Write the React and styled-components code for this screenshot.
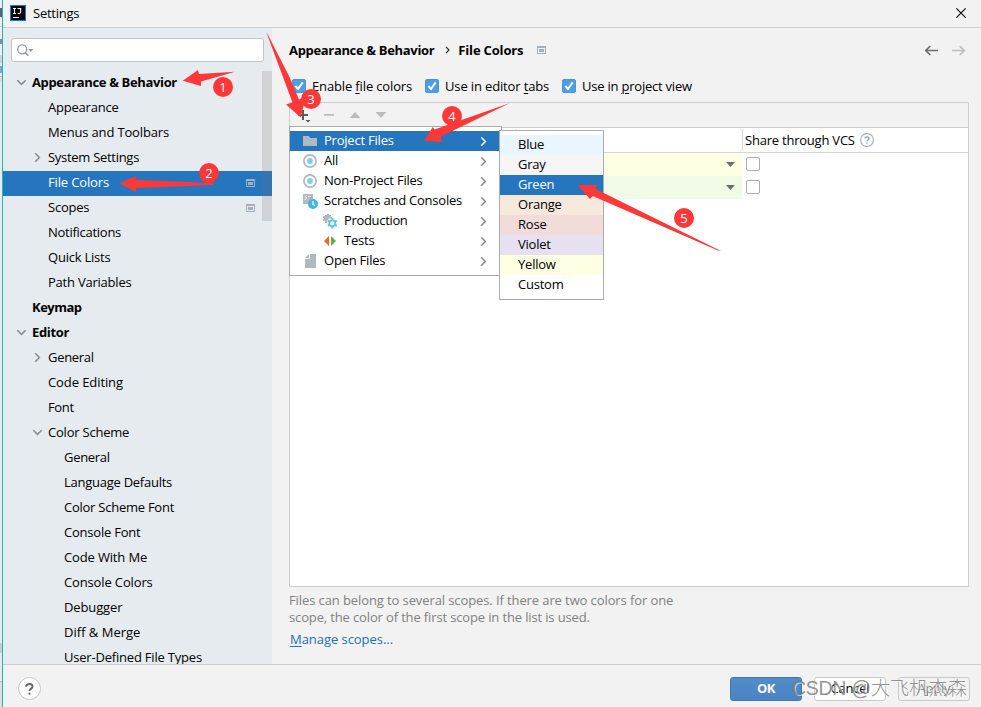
import React from 'react';
import styled, { createGlobalStyle, css } from 'styled-components';

const GlobalStyle = createGlobalStyle`
  * { box-sizing: border-box; }
  html, body { margin: 0; padding: 0; overflow: hidden; }
  body {
    font-family: "Open Sans", "Noto Sans", "Noto Sans CJK SC", sans-serif;
    font-size: 13px;
    line-height: 18px;
    color: #000;
    background: #f2f2f2;
  }
  svg { display: block; flex: none; }
`;

const Screen = styled.div`
  position: relative;
  display: flex;
  width: 981px;
  height: 707px;
  overflow: hidden;
`;

/* Sliver of the editor window that stays visible behind the dialog */
const Backdrop = styled.div`
  display: flex;
  flex-direction: column;
  flex: none;
  width: 2px;
  overflow: hidden;
`;

const BackdropPiece = styled.div`
  flex: none;
  height: ${(p) => p.$h}px;
  background: ${(p) => p.$c};
`;

const Dialog = styled.div`
  flex: 1;
  min-width: 0;
  display: flex;
  flex-direction: column;
  border-left: 1px solid #12bcc0;
  background: #f2f2f2;
`;

const Label = styled.span`
  white-space: pre;
  letter-spacing: ${(p) => (p.$ls === undefined ? -0.22 : p.$ls)}px;
  font-weight: ${(p) => (p.$bold ? 700 : 400)};
`;

const Mnemonic = styled.span`
  text-decoration: underline;
  text-underline-offset: 2px;
  text-decoration-thickness: 1px;
`;

const TitleBar = styled.header`
  display: flex;
  align-items: center;
  gap: 7px;
  height: 28px;
  padding: 0 15px 1px 7px;
  border-bottom: 1px solid #cdcdcd;
`;

const Spacer = styled.div`
  flex: 1;
`;

const Body = styled.div`
  display: flex;
  height: 636px;
`;

const Sidebar = styled.aside`
  display: flex;
  flex-direction: column;
  width: 269px;
  background: #e6ebef;
  overflow: hidden;
`;

const SearchField = styled.div`
  display: flex;
  align-items: center;
  flex: none;
  height: 24px;
  margin: 10px 8px 9px;
  padding-left: 5px;
  border: 1px solid #c4c4c4;
  border-radius: 3px;
  background: #fff;
`;

const Tree = styled.div`
  flex: 1;
  min-height: 0;
  display: grid;
  grid-template-columns: 1fr 10px;
  overflow: hidden;
`;

const TreeRows = styled.div`
  grid-area: 1 / 1 / 2 / 3;
`;

const ScrollThumb = styled.div`
  grid-area: 1 / 2 / 2 / 3;
  z-index: 1;
  height: 150px;
  background: rgba(115, 115, 115, 0.2);
`;

const TreeRow = styled.div`
  display: flex;
  align-items: center;
  height: 25px;
  padding: 0 17px 2px ${(p) => 13 + p.$level * 16}px;
  ${(p) =>
    p.$selected &&
    css`
      color: #fff;
      background: #2675bf;
    `}
`;

const TreeLabel = styled(Label)`
  padding-bottom: 1px;
`;

const Twisty = styled.span`
  display: flex;
  align-items: center;
  width: 16px;
  height: 16px;
`;

const Content = styled.main`
  flex: 1;
  display: flex;
  flex-direction: column;
  padding: 13px 12px 0 17px;
`;

const Breadcrumb = styled.div`
  display: flex;
  align-items: center;
  height: 18px;
`;

const CrumbSeparator = styled.span`
  margin: 0 8px 0 11px;
`;

const CrumbMark = styled.span`
  margin-left: 14px;
`;

const History = styled.div`
  display: flex;
  gap: 14px;
  margin-right: 4px;
`;

const Options = styled.div`
  display: flex;
  align-items: center;
  height: 18px;
  margin-top: 18px;
`;

const Option = styled.label`
  display: flex;
  align-items: center;
  gap: 6px;
  width: ${(p) => p.$w}px;
  padding-left: 3px;
`;

const CheckBox = styled.span`
  display: flex;
  align-items: center;
  justify-content: center;
  flex: none;
  width: 14px;
  height: 14px;
  border: 1px solid ${(p) => (p.$on ? '#4a94da' : '#b0b0b0')};
  border-radius: 2px;
  background: ${(p) => (p.$on ? '#4f9ee3' : '#fff')};
`;

const TablePanel = styled.section`
  display: flex;
  flex-direction: column;
  width: 680px;
  height: 485px;
  margin-top: 7px;
  border: 1px solid #cdcdcd;
  background: #fff;
`;

const Toolbar = styled.div`
  display: flex;
  align-items: center;
  height: 25px;
  padding-left: 5px;
  gap: 10px;
  border-bottom: 1px solid #cdcdcd;
  background: #f2f2f2;
`;

const HeaderRow = styled.div`
  display: flex;
  height: 25px;
  padding: 1px 0;
  border-bottom: 1px solid #d5d5d5;
`;

const HeaderCell = styled.div`
  display: flex;
  align-items: center;
  gap: 5px;
  width: ${(p) => p.$w}px;
  padding-left: 2px;
  border-right: ${(p) => (p.$last ? 0 : 1)}px solid #d5d5d5;
`;

const ColorRow = styled.div`
  display: flex;
  align-items: flex-start;
  height: 23px;

  ${CheckBox} {
    margin-top: 4px;
  }
`;

const ColorCell = styled.div`
  display: flex;
  align-items: center;
  justify-content: flex-end;
  width: 452px;
  height: 23px;
  margin-right: 4px;
  padding-right: 7px;
  background: ${(p) => p.$c};
`;

const Note = styled.p`
  margin: 5px 0 0;
  line-height: 17px;
  color: #818181;
`;

const Link = styled.a`
  margin-top: 4px;
  padding-left: 1px;
  color: #2470b3;
`;

const Footer = styled.footer`
  display: flex;
  align-items: center;
  gap: 12px;
  height: 43px;
  padding: 5px 11px 0 15px;
  border-top: 1px solid #cdcdcd;
`;

const HelpButton = styled.button`
  display: flex;
  align-items: center;
  justify-content: center;
  width: 23px;
  height: 23px;
  padding: 0;
  border: 1px solid #c4c4c4;
  border-radius: 50%;
  background: #fff;
`;

const Button = styled.button`
  width: 72px;
  height: 24px;
  padding: 0 0 1px;
  font: inherit;
  border: 1px solid ${(p) => (p.$primary ? '#3f77b5' : '#c8c8c8')};
  border-radius: 3px;
  color: ${(p) => (p.$primary ? '#fff' : p.disabled ? '#8c8c8c' : '#000')};
  background: ${(p) => (p.$primary ? 'linear-gradient(#528ccb, #4a83c2)' : p.disabled ? '#f2f2f2' : '#fff')};
`;

const Popup = styled.div`
  position: absolute;
  left: 289px;
  top: 126px;
  width: 213px;
  height: 150px;
  padding: 4px 2px 0 0;
  border: 1px solid #adadad;
  background: #fff;
`;

const Submenu = styled.div`
  position: absolute;
  left: 499px;
  top: 130px;
  width: 105px;
  height: 170px;
  padding-top: 4px;
  border: 1px solid #adadad;
  background: #fff;
`;

const MenuItem = styled.div`
  display: flex;
  align-items: center;
  height: 20px;
  padding: 0 10px 0 ${(p) => (p.$nested ? 32 : 12)}px;
  gap: 6px;
  color: ${(p) => (p.$selected ? '#fff' : '#000')};
  background: ${(p) => (p.$selected ? '#2675bf' : 'transparent')};
`;

const MenuLabel = styled(Label)`
  padding-bottom: 2px;
`;

const ColorItem = styled.div`
  display: flex;
  align-items: center;
  height: 20px;
  padding-left: 18px;
  color: ${(p) => (p.$selected ? '#fff' : '#000')};
  background: ${(p) => p.$c};
`;

const AnnotationLayer = styled.svg`
  position: absolute;
  left: 0;
  top: 0;
  pointer-events: none;
`;

const Badge = styled.span`
  position: absolute;
  left: ${(p) => p.$x - 10}px;
  top: ${(p) => p.$y - 10}px;
  display: flex;
  align-items: center;
  justify-content: center;
  width: 20px;
  height: 20px;
  padding-bottom: 1px;
  border-radius: 50%;
  font-size: 13px;
  color: #fff;
  background: #fd3838;
`;

const Watermark = styled.span`
  position: absolute;
  left: 792px;
  top: 676px;
  font-family: "Liberation Sans", "Noto Sans CJK SC", sans-serif;
  font-weight: 300;
  font-size: 19.5px;
  line-height: 24px;
  letter-spacing: -0.3px;
  white-space: nowrap;
  color: rgba(120, 120, 120, 0.8);
  text-shadow: 1px 1px 0 rgba(255, 255, 255, 0.6);
`;

const Chevron = ({ down, color = '#8a8a8a' }) => (
  <svg width="11" height="11" viewBox="0 0 11 11" fill="none" stroke={color} strokeWidth="1.5">
    {down ? <path d="M1.3 3.2 5.5 7.4 9.7 3.2" /> : <path d="M3.2 1.3 7.4 5.5 3.2 9.7" />}
  </svg>
);

const ScopeIcon = () => (
  <svg width="9" height="8" viewBox="0 0 9 8">
    <path d="M0 0h9v8H0zM1 2v5h7V2z" fill="#a3b0ba" fillRule="evenodd" />
    <path d="M2 3h5v3H2z" fill="#a3b0ba" />
  </svg>
);

const AppIcon = () => (
  <svg width="16" height="16" viewBox="0 0 16 16">
    <rect width="16" height="16" fill="#087cfa" />
    <rect x="1" y="1" width="14" height="14" fill="#000" />
    <path d="M3 3.5h3M4.5 3.5v5M3 8.5h3M7.5 3.5h3.2v3.6q0 1.4-1.6 1.4H7.6M3 12.5h6" stroke="#fff" strokeWidth="1.1" fill="none" />
  </svg>
);

const CloseIcon = () => (
  <svg width="10" height="10" viewBox="0 0 10 10" stroke="#111" strokeWidth="1.2">
    <path d="M.4.4 9.6 9.6M9.6.4.4 9.6" />
  </svg>
);

const SearchIcon = () => (
  <svg width="17" height="13" viewBox="0 0 17 13" fill="none" stroke="#939ca3" strokeWidth="1.3">
    <circle cx="5.2" cy="5.3" r="4.5" />
    <path d="M8.3 8.6 11.4 11.8" strokeWidth="1.6" />
    <path d="M11.3 5h5L13.8 8z" fill="#939ca3" stroke="none" />
  </svg>
);

const ArrowIcon = ({ right, color }) => (
  <svg width="13" height="11" viewBox="0 0 13 11" fill="none" stroke={color} strokeWidth="1.7">
    {right ? <path d="M0 5.5h12M7.7 1 12.2 5.5 7.7 10" /> : <path d="M13 5.5H1M5.3 1 .8 5.5 5.3 10" />}
  </svg>
);

const Tick = () => (
  <svg width="12" height="12" viewBox="0 0 12 12" fill="none" stroke="#fff" strokeWidth="1.9">
    <path d="M2.4 6 5 8.9 9.7 2.4" />
  </svg>
);

const ToolbarIcon = ({ kind }) => (
  <svg width="16" height="16" viewBox="0 0 16 16">
    {kind === 'add' && <path d="M7 3h2v4h4v2H9v4H7V9H3V7h4zM10.5 13h5L13 15.5z" fill="#5a5a5a" />}
    {kind === 'remove' && <path d="M3 7h10v1.8H3z" fill="#bcbcbc" />}
    {kind === 'up' && <path d="M2.5 11h11L8 5z" fill="#bcbcbc" />}
    {kind === 'down' && <path d="M2.5 5h11L8 11z" fill="#bcbcbc" />}
  </svg>
);

const DropIcon = () => (
  <svg width="9" height="5" viewBox="0 0 9 5">
    <path d="M0 0h9L4.5 5z" fill="#6e6e6e" />
  </svg>
);

const QuestionIcon = () => (
  <svg width="14" height="14" viewBox="0 0 14 14" fill="none" stroke="#a3b0ba">
    <circle cx="7" cy="7" r="6.4" strokeWidth="1.1" />
    <path d="M5 5.6Q5 3.8 7 3.8t2 1.6c0 1.2-2 1.4-2 2.9M7 9.4v1.4" strokeWidth="1.3" stroke="#8f9ba5" />
  </svg>
);

const HelpGlyph = () => (
  <svg width="9" height="12" viewBox="0 0 9 12" fill="none" stroke="#666" strokeWidth="1.9">
    <path d="M1.1 3.8Q1.1 1 4.4 1t3.2 2.6C7.6 5.7 4.5 5.6 4.5 8M4.5 9.7v2.1" />
  </svg>
);

const CrumbArrow = () => (
  <svg width="5" height="8" viewBox="0 0 5 8" fill="none" stroke="#222" strokeWidth="1.1">
    <path d="M1 .8 4 4 1 7.2" />
  </svg>
);

const COG_TEETH = [0, 60, 120];

const ScopeTypeIcon = ({ kind }) => (
  <svg width="16" height="16" viewBox="0 0 16 16">
    {kind === 'folder' && <path d="M1 3h5.5l2 2H15v8H1z" fill="#aeb9c0" />}
    {kind === 'scope' && (
      <>
        <circle cx="8" cy="8" r="6.1" fill="none" stroke="#aeb9c0" strokeWidth="1.7" />
        <circle cx="8" cy="8" r="2.9" fill="#7fcfea" />
      </>
    )}
    {kind === 'scratch' && (
      <>
        <path d="M1 1h10v5L6 11H1z" fill="#aeb9c0" />
        <path d="M2.5 2.8 4.7 5 2.5 7.2M6 3.5h3" stroke="#fff" fill="none" />
        <circle cx="11" cy="11" r="5" fill="#40b6e0" />
        <path d="M11 8v3.4l2.2 1.3" stroke="#fff" strokeWidth="1.1" fill="none" />
      </>
    )}
    {kind === 'production' && (
      <>
        <path d="M3 2h2V1h2v1h2v2h1v1.5H7L5 8v2H3V8H1V6h1V5H1V3h2z" fill="#aeb9c0" />
        <circle cx="10.3" cy="10.3" r="3" fill="#fff" stroke="#62c3e6" strokeWidth="1.8" />
        {COG_TEETH.map((a) => (
          <path key={a} d="M10.3 5.1v2M10.3 13.5v2" transform={`rotate(${a} 10.3 10.3)`} stroke="#62c3e6" strokeWidth="2" />
        ))}
      </>
    )}
    {kind === 'tests' && (
      <>
        <path d="M7 3v10L2 8z" fill="#f26522" />
        <path d="M9 3v10l5-5z" fill="#5fad48" />
      </>
    )}
    {kind === 'file' && (
      <>
        <path d="M8 1h6v14H3V6h5z" fill="#aeb9c0" />
        <path d="M7 1v4H3z" fill="#aeb9c0" />
      </>
    )}
  </svg>
);

const BACKDROP = [
  [8, '#ececec'], [9, '#5d5d80'], [9, '#ececec'], [1, '#cfcfcf'], [12, '#f0f0f0'], [5, '#7a8fb0'],
  [11, '#f0f0f0'], [8, '#d4d4d4'], [3, '#e6e6e6'],
  [7, '#76aec0'], [3, '#e8e8e8'], [1, '#b8c2c6'], [5, '#dcdcdc'], [561, '#e6ebee'],
  [10, '#c9cdd0'], [28, '#e9e9e9'], [1, '#bdbdbd'], [25, '#dedede'],
];

const TREE = [
  { text: 'Appearance & Behavior', level: 0, open: true, bold: true, ls: -0.35 },
  { text: 'Appearance', level: 1 },
  { text: 'Menus and Toolbars', level: 1, ls: -0.16 },
  { text: 'System Settings', level: 1, closed: true, ls: -0.29 },
  { text: 'File Colors', level: 1, selected: true, scoped: true, ls: -0.14 },
  { text: 'Scopes', level: 1, scoped: true },
  { text: 'Notifications', level: 1, ls: -0.27 },
  { text: 'Quick Lists', level: 1 },
  { text: 'Path Variables', level: 1 },
  { text: 'Keymap', level: 0, bold: true, ls: -0.5 },
  { text: 'Editor', level: 0, open: true, bold: true, ls: -0.34 },
  { text: 'General', level: 1, closed: true, ls: -0.3 },
  { text: 'Code Editing', level: 1, ls: -0.09 },
  { text: 'Font', level: 1, ls: -0.35 },
  { text: 'Color Scheme', level: 1, open: true },
  { text: 'General', level: 2, ls: -0.3 },
  { text: 'Language Defaults', level: 2, ls: -0.26 },
  { text: 'Color Scheme Font', level: 2, ls: -0.25 },
  { text: 'Console Font', level: 2 },
  { text: 'Code With Me', level: 2 , ls: -0.15 },
  { text: 'Console Colors', level: 2, ls: -0.14 },
  { text: 'Debugger', level: 2, ls: -0.12 },
  { text: 'Diff & Merge', level: 2, ls: 0 },
  { text: 'User-Defined File Types', level: 2, ls: -0.2 },
];

const SCOPES = [
  { text: 'Project Files', icon: 'folder', selected: true },
  { text: 'All', icon: 'scope' },
  { text: 'Non-Project Files', icon: 'scope' },
  { text: 'Scratches and Consoles', icon: 'scratch' },
  { text: 'Production', icon: 'production', nested: true, ls: -0.33 },
  { text: 'Tests', icon: 'tests', nested: true },
  { text: 'Open Files', icon: 'file' },
];

const COLORS = [
  ['Blue', '#e9f5ff'], ['Gray', '#f5f5f5'], ['Green', '#2675bf', true], ['Orange', '#f6e9dc'],
  ['Rose', '#f2dcda'], ['Violet', '#e6e0f1'], ['Yellow', '#ffffe4'], ['Custom', '#fff'],
];

const ARROWS = [
  '182.7,80.8 198,70 199,74 235,71.7 201,81.5 201,86',
  '119.3,183.3 136,176 136,179.8 214,183.2 214,185 136,188 136,192',
  '266.2,32 268,35 289,76 299,99.5 306,96 300.7,117.5 286,104.5 292.5,102.5',
  '424,140.7 432.7,127 434.5,129.5 510,103 440.5,136.8 442.3,142',
  '577.3,185 597,185 595.7,189 721,251 718,250.6 592.7,196 590,199',
];

const BADGES = [[223, 87], [209, 173], [311, 99], [452, 116], [684, 218]];

export default function App() {
  return (
    <Screen>
      <GlobalStyle />
      <Backdrop>
        {BACKDROP.map(([h, c], i) => (
          <BackdropPiece key={i} $h={h} $c={c} />
        ))}
      </Backdrop>
      <Dialog>
        <TitleBar>
          <AppIcon />
          <Label $ls={-0.25}>Settings</Label>
          <Spacer />
          <CloseIcon />
        </TitleBar>
        <Body>
          <Sidebar>
            <SearchField>
              <SearchIcon />
            </SearchField>
            <Tree>
              <TreeRows>
                {TREE.map((n, i) => (
                  <TreeRow key={i} $level={n.level} $selected={n.selected}>
                    <Twisty>{(n.open || n.closed) && <Chevron down={n.open} />}</Twisty>
                    <TreeLabel $bold={n.bold} $ls={n.ls}>{n.text}</TreeLabel>
                    <Spacer />
                    {n.scoped && <ScopeIcon />}
                  </TreeRow>
                ))}
              </TreeRows>
              <ScrollThumb />
            </Tree>
          </Sidebar>
          <Content>
            <Breadcrumb>
              <Label $bold $ls={-0.33}>Appearance & Behavior</Label>
              <CrumbSeparator><CrumbArrow /></CrumbSeparator>
              <Label $bold $ls={-0.17}>File Colors</Label>
              <CrumbMark><ScopeIcon /></CrumbMark>
              <Spacer />
              <History>
                <ArrowIcon color="#6e6e6e" />
                <ArrowIcon right color="#bdbdbd" />
              </History>
            </Breadcrumb>
            <Options>
              <Option $w={133}>
                <CheckBox $on><Tick /></CheckBox>
                <Label $ls={-0.14}>Enable <Mnemonic>f</Mnemonic>ile colors</Label>
              </Option>
              <Option $w={137}>
                <CheckBox $on><Tick /></CheckBox>
                <Label $ls={-0.14}>Use in editor <Mnemonic>t</Mnemonic>abs</Label>
              </Option>
              <Option $w={140}>
                <CheckBox $on><Tick /></CheckBox>
                <Label>Use in <Mnemonic>p</Mnemonic>roject view</Label>
              </Option>
            </Options>
            <TablePanel>
              <Toolbar>
                <ToolbarIcon kind="add" />
                <ToolbarIcon kind="remove" />
                <ToolbarIcon kind="up" />
                <ToolbarIcon kind="down" />
              </Toolbar>
              <HeaderRow>
                <HeaderCell $w={227} />
                <HeaderCell $w={226} />
                <HeaderCell $w={225} $last>
                  <Label>Share through VCS</Label>
                  <QuestionIcon />
                </HeaderCell>
              </HeaderRow>
              <ColorRow>
                <ColorCell $c="#ffffe4"><DropIcon /></ColorCell>
                <CheckBox />
              </ColorRow>
              <ColorRow>
                <ColorCell $c="#effae7"><DropIcon /></ColorCell>
                <CheckBox />
              </ColorRow>
            </TablePanel>
            <Note>
              <Label $ls={-0.1}>Files can belong to several scopes. If there are two colors for one</Label>
              <br />
              <Label $ls={-0.14}>scope, the color of the first scope in the list is used.</Label>
            </Note>
            <Link><Label $ls={-0.05}><Mnemonic>M</Mnemonic>anage scopes...</Label></Link>
          </Content>
        </Body>
        <Footer>
          <HelpButton><HelpGlyph /></HelpButton>
          <Spacer />
          <Button $primary><Label $bold $ls={-0.4}>OK</Label></Button>
          <Button><Label>Cancel</Label></Button>
          <Button disabled><Label>Apply</Label></Button>
        </Footer>
      </Dialog>

      <Popup>
        {SCOPES.map((s) => (
          <MenuItem key={s.text} $selected={s.selected} $nested={s.nested}>
            <ScopeTypeIcon kind={s.icon} />
            <MenuLabel $ls={s.ls}>{s.text}</MenuLabel>
            <Spacer />
            <Chevron color={s.selected ? '#fff' : '#8a8a8a'} />
          </MenuItem>
        ))}
      </Popup>
      <Submenu>
        {COLORS.map(([name, c, selected]) => (
          <ColorItem key={name} $c={c} $selected={selected}>
            <MenuLabel>{name}</MenuLabel>
          </ColorItem>
        ))}
      </Submenu>

      <AnnotationLayer width="981" height="707" viewBox="0 0 981 707" fill="#fd3838">
        {ARROWS.map((points) => (
          <polygon key={points} points={points} />
        ))}
      </AnnotationLayer>
      {BADGES.map(([x, y], i) => (
        <Badge key={i} $x={x} $y={y}>{i + 1}</Badge>
      ))}
      <Watermark>CSDN @大飞机杰森</Watermark>
    </Screen>
  );
}
